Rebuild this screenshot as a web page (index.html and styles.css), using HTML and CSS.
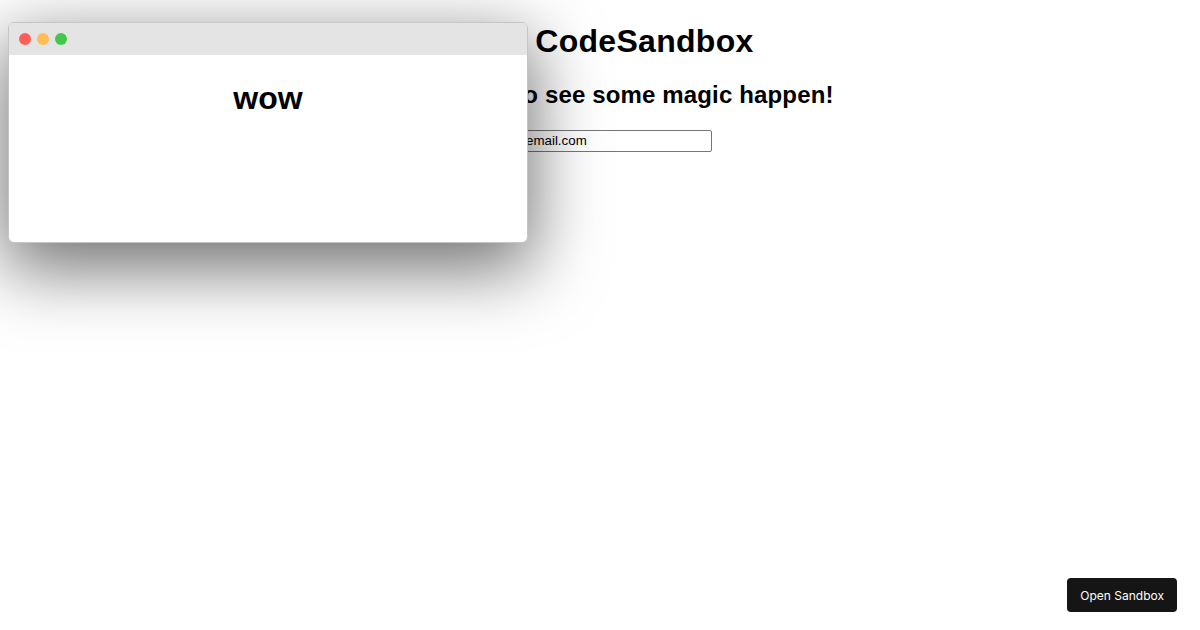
FILE: index.html
```html
<!DOCTYPE html>
<html lang="en">
<head>
<meta charset="utf-8">
<title>CodeSandbox</title>
<link rel="stylesheet" href="styles.css">
</head>
<body>
  <div class="app">
    <h1 class="title">Hello CodeSandbox</h1>
    <h2 class="subtitle">Start editing to see some magic happen!</h2>
    <input class="email" type="text" value="you@email.com">
  </div>

  <div class="window">
    <div class="titlebar">
      <span class="dot dot-red"></span>
      <span class="dot dot-yellow"></span>
      <span class="dot dot-green"></span>
    </div>
    <div class="window-body">
      <h1 class="wow">wow</h1>
    </div>
  </div>

  <a class="open-sandbox" href="#">Open Sandbox</a>
</body>
</html>
```

FILE: styles.css
```css
html, body {
  background: #ffffff;
}

body {
  margin: 8px;
  font-family: "Liberation Sans", Arial, sans-serif;
  color: #000;
}

.app {
  text-align: center;
}

.title {
  font-size: 32px;
  font-weight: bold;
  letter-spacing: 0.3px;
  margin: 14.5px 0 21.44px;
}

.subtitle {
  font-size: 24px;
  font-weight: bold;
  letter-spacing: 0.15px;
  margin: 19.92px 0 21px;
}

.email {
  display: block;
  box-sizing: border-box;
  width: 224px;
  height: 22px;
  margin: 0 auto;
  padding: 1px 2px;
  border: 1px solid #767676;
  border-radius: 2px;
  font-family: "Liberation Sans", Arial, sans-serif;
  font-size: 13.333px;
  color: #000;
  background: #fff;
}

.window {
  position: absolute;
  left: 8px;
  top: 22px;
  width: 520px;
  height: 221px;
  box-sizing: border-box;
  border: 1px solid #c6c6c6;
  border-radius: 6px;
  background: #fff;
  overflow: hidden;
  box-shadow: rgba(0, 0, 0, 0.56) 0px 22px 70px 4px;
  display: flex;
  flex-direction: column;
}

.titlebar {
  height: 32px;
  flex: 0 0 32px;
  background: #e4e4e4;
  display: flex;
  align-items: center;
  gap: 6px;
  padding-left: 10px;
}

.dot {
  width: 12px;
  height: 12px;
  border-radius: 50%;
  display: block;
}

.dot-red { background: #ff5f57; }
.dot-yellow { background: #ffbd55; }
.dot-green { background: #41c94b; }

.window-body {
  flex: 1;
  text-align: center;
  padding-top: 1px;
}

.wow {
  font-size: 32px;
  font-weight: bold;
  margin: 24px 0 0;
}

.open-sandbox {
  position: fixed;
  right: 23px;
  bottom: 18px;
  height: 34px;
  box-sizing: border-box;
  padding: 0 13px;
  display: flex;
  align-items: center;
  background: #151515;
  color: #ffffff;
  border-radius: 4px;
  font-family: Inter, "Liberation Sans", sans-serif;
  font-size: 12px;
  text-decoration: none;
}
```
